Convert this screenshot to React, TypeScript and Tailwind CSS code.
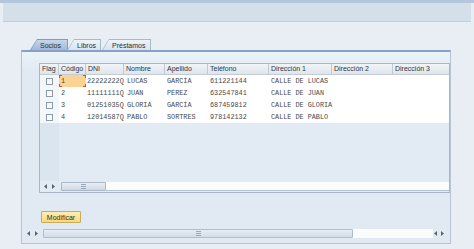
import React from "react";

const SANS = "font-['Liberation_Sans',Arial,sans-serif]";
const MONO = "font-['Liberation_Mono','Courier_New',monospace]";

const COLS = [
  { label: "Flag", w: "w-[19px]" },
  { label: "Código", w: "w-[27px]" },
  { label: "DNI", w: "w-[38px]" },
  { label: "Nombre", w: "w-[41px]" },
  { label: "Apellido", w: "w-[43px]" },
  { label: "Teléfono", w: "w-[61px]" },
  { label: "Dirección 1", w: "w-[63px]" },
  { label: "Dirección 2", w: "w-[61px]" },
  { label: "Dirección 3", w: "w-[56px]" },
];

const ROWS = [
  ["1", "22222222Q", "LUCAS", "GARCÍA", "611221144", "CALLE DE LUCAS"],
  ["2", "11111111Q", "JUAN", "PÉREZ", "632547841", "CALLE DE JUAN"],
  ["3", "01251035Q", "GLORIA", "GARCÍA", "687459812", "CALLE DE GLORIA"],
  ["4", "12014587Q", "PABLO", "SORTRES", "978142132", "CALLE DE PABLO"],
];

function Arrow({ dir }: { dir: "l" | "r" }) {
  return (
    <svg width="3" height="5" viewBox="0 0 3 5" className="block">
      {dir === "l" ? (
        <path d="M3 0 L0 2.5 L3 5 Z" fill="#5b6572" />
      ) : (
        <path d="M0 0 L3 2.5 L0 5 Z" fill="#5b6572" />
      )}
    </svg>
  );
}

function Grip() {
  return (
    <div className="flex flex-col gap-[1px]">
      <span className="block h-px w-[5px] bg-[#9aa9b9]" />
      <span className="block h-px w-[5px] bg-[#9aa9b9]" />
      <span className="block h-px w-[5px] bg-[#9aa9b9]" />
    </div>
  );
}

function Tab({ label, w, active }: { label: string; w: string; active?: boolean }) {
  return (
    <div
      className={`${w} h-[11px] px-[1px] pt-[1px] [clip-path:polygon(7px_0,100%_0,100%_100%,0_100%)] ${
        active ? "bg-[#7f9bc2]" : "bg-[#a9b9cc]"
      }`}
    >
      <div
        className={`flex h-full items-center pl-[9px] text-[7px] leading-none text-[#24303d] [clip-path:polygon(6px_0,100%_0,100%_100%,0_100%)] ${
          active
            ? "bg-gradient-to-b from-[#c6d6ea] to-[#a0b9da]"
            : "bg-gradient-to-b from-[#eef3f8] to-[#d9e3ee]"
        }`}
      >
        {label}
      </div>
    </div>
  );
}

function Checkbox() {
  return <span className="block h-[7px] w-[7px] border border-[#8d9aa8] bg-gradient-to-b from-[#f2f4f6] to-white" />;
}

export default function App() {
  return (
    <div className={`h-[249px] w-[474px] overflow-hidden bg-[#e9eef4] ${SANS}`}>
      <div className="h-[3px] bg-[#b3c6dc]" />
      <div className="mx-[3px] h-[19px] border-b border-[#c3cfdb] bg-[#d5dfe9]" />

      {/* tabs */}
      <div className="ml-[30px] mt-[17px] flex">
        <Tab label="Socios" w="w-[38px]" active />
        <div className="-ml-[1px]">
          <Tab label="Libros" w="w-[34px]" />
        </div>
        <div className="ml-[1px]">
          <Tab label="Préstamos" w="w-[49px]" />
        </div>
      </div>

      {/* panel */}
      <div className="ml-[21px] h-[194px] w-[430px] border-x border-b border-t-2 border-x-[#b6c5d5] border-b-[#b6c5d5] border-t-[#87a1c6] bg-gradient-to-b from-[#eaf3f8] from-0% to-[#e1eaf3] to-10%">
        <div className="ml-[17px] mt-[11px] flex h-[130px] w-[411px] flex-col border border-[#a8b6c5] bg-[#e2eaf3]">
          {/* header */}
          <div className="flex h-[11px] border-b border-[#c3ccd6] bg-gradient-to-b from-[#f1f4f7] to-[#dfe5ec]">
            {COLS.map((c) => (
              <div
                key={c.label}
                className={`${c.w} shrink-0 border-r border-[#c0cad5] pl-[2px] text-[7px] leading-[10px] whitespace-nowrap text-[#2c3640] last:border-r-0`}
              >
                {c.label}
              </div>
            ))}
          </div>

          {/* rows */}
          {ROWS.map((r, i) => (
            <div key={r[0]} className={`flex h-[12px] bg-white text-[6.8px] leading-[12px] text-[#45494e] ${MONO}`}>
              <div className="flex w-[19px] shrink-0 items-center justify-center bg-[#f4f7fa]">
                <Checkbox />
              </div>
              <div className={`relative w-[27px] shrink-0 pl-[2px] ${i === 0 ? "bg-[#fcd392]" : ""}`}>
                {r[0]}
                {i === 0 && (
                  <>
                    <span className="absolute left-0 top-0 h-[3px] w-[3px] border-l border-t border-[#e0463a]" />
                    <span className="absolute bottom-0 left-0 h-[3px] w-[3px] border-b border-l border-[#e0463a]" />
                    <span className="absolute right-0 top-0 h-[3px] w-[3px] border-r border-t border-[#e0463a]" />
                    <span className="absolute bottom-0 right-0 h-[3px] w-[3px] border-b border-r border-[#e0463a]" />
                  </>
                )}
              </div>
              <div className="w-[38px] shrink-0 whitespace-nowrap pl-[1px]">{r[1]}</div>
              <div className="w-[41px] shrink-0 whitespace-nowrap pl-[3px]">{r[2]}</div>
              <div className="w-[43px] shrink-0 whitespace-nowrap pl-[2px]">{r[3]}</div>
              <div className="w-[61px] shrink-0 whitespace-nowrap pl-[2px]">{r[4]}</div>
              <div className="w-[63px] shrink-0 whitespace-nowrap pl-[2px]">{r[5]}</div>
              <div className="w-[61px] shrink-0" />
              <div className="w-[56px] shrink-0" />
            </div>
          ))}

          {/* empty body */}
          <div className="flex flex-1">
            <div className="w-[19px] bg-[#dbe5ef]" />
            <div className="flex-1" />
          </div>

          {/* table scrollbar */}
          <div className="flex h-[11px] items-center">
            <div className="flex w-[21px] items-center gap-[5px] pl-[4px]">
              <Arrow dir="l" />
              <Arrow dir="r" />
            </div>
            <div className="flex h-[9px] w-[45px] items-center justify-center rounded-[1px] border border-[#a9b7c6] bg-gradient-to-b from-[#e9eef3] to-[#cfd9e4]">
              <Grip />
            </div>
            <div className="h-[9px] flex-1 border-b border-[#b5c2cf] bg-[#fbfcfd]" />
          </div>
        </div>

        {/* button */}
        <button className="ml-[19px] mt-[18px] flex h-[12px] w-[40px] items-center justify-center rounded-[1px] border border-[#c9aa5a] bg-gradient-to-b from-[#fdeeb4] to-[#f7d97e] text-[7px] leading-none text-[#3a2e10]">
          Modificar
        </button>

        {/* bottom scrollbar */}
        <div className="ml-[2px] mt-[5px] flex h-[11px] w-[423px] items-center">
          <div className="flex w-[19px] items-center gap-[5px] pl-[3px]">
            <Arrow dir="l" />
            <Arrow dir="r" />
          </div>
          <div className="flex h-[9px] w-[310px] items-center justify-center rounded-[1px] border border-[#b0bdca] bg-gradient-to-b from-[#e7edf3] to-[#d2dce6]">
            <Grip />
          </div>
          <div className="h-[9px] w-[80px] bg-[#fbfcfd]" />
          <div className="flex w-[14px] items-center gap-[4px] pl-[1px]">
            <Arrow dir="l" />
            <Arrow dir="r" />
          </div>
        </div>
      </div>
    </div>
  );
}
